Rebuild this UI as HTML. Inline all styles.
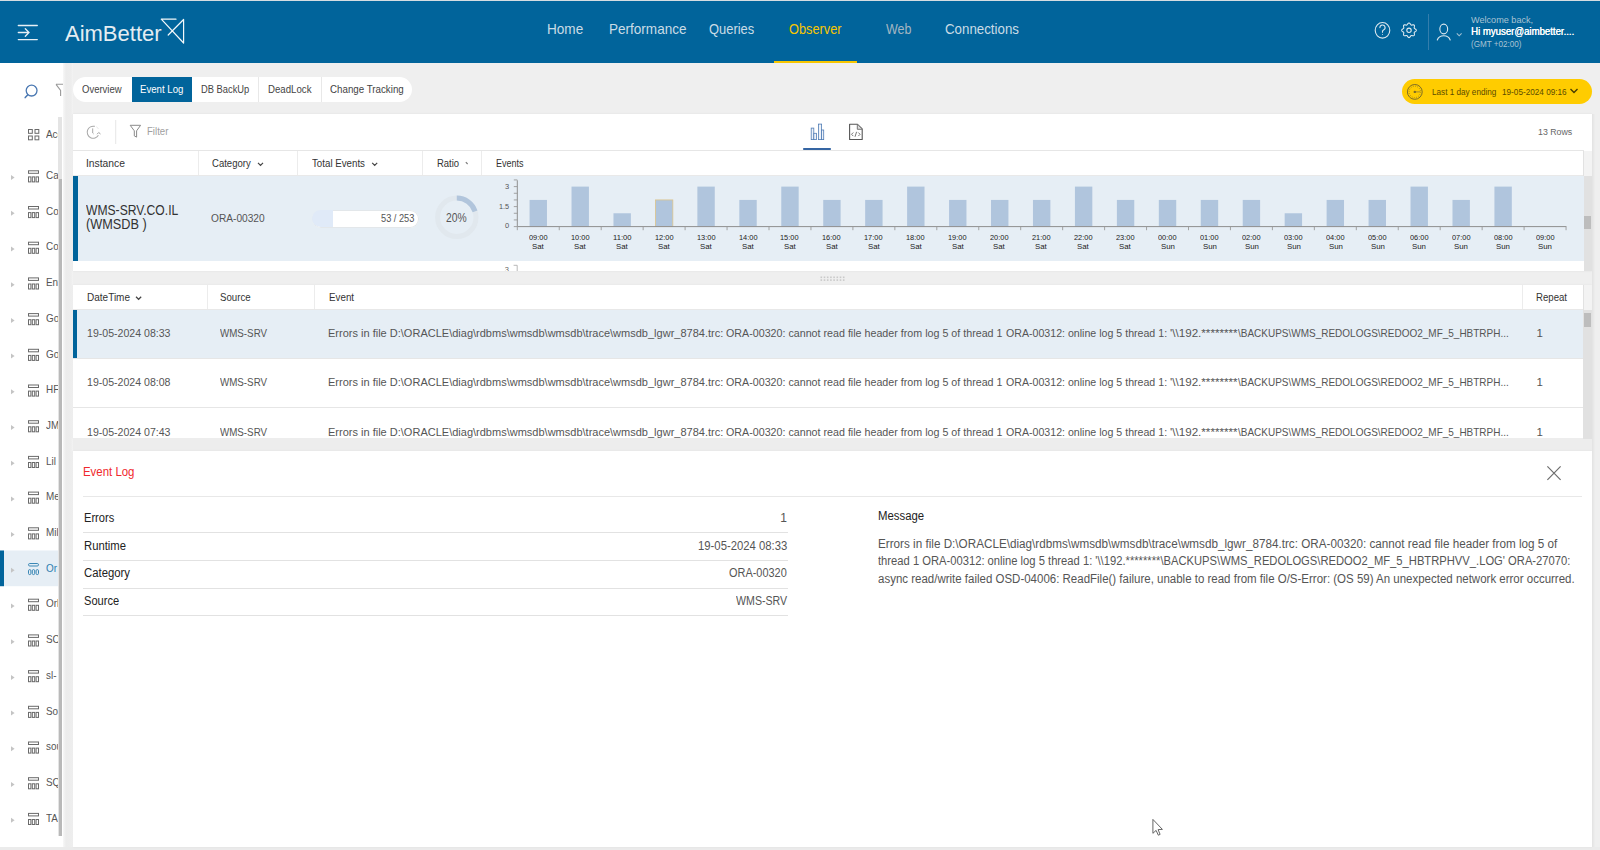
<!DOCTYPE html>
<html><head><meta charset="utf-8"><style>
html,body{margin:0;padding:0;}
body{width:1600px;height:850px;position:relative;overflow:hidden;background:#efefef;font-family:"Liberation Sans",sans-serif;}
body>div,body>svg,.t{position:absolute;}
.t{white-space:nowrap;line-height:1;transform-origin:0 0;}
</style></head><body>
<div style="left:0px;top:0px;width:1600px;height:1px;background:#d5dde2;"></div>
<div style="left:0px;top:1px;width:1600px;height:62px;background:#01649b;"></div>
<svg style="left:0px;top:0px" width="200" height="63" viewBox="0 0 200 63"><g stroke="#e8f0f5" stroke-width="1.3" fill="none" stroke-linecap="round"><path d="M18.3 25.5H37.3M18.3 39.6H37.3M18.3 32.5H29M25.3 28.7L29 32.5L25.3 36.3"/></g><g stroke="#f4f8fa" stroke-width="1.2" fill="none" stroke-linecap="round" stroke-linejoin="round"><path d="M161.3 19.2H176M161.3 19.2L183.6 43M183.6 19.5V43M183.6 19.5L168.2 35"/></g></svg>
<div style="left:774px;top:61px;width:83px;height:2px;background:#f7c600;"></div>
<svg style="left:1360px;top:0px" width="120" height="63" viewBox="1360 0 120 63"><g stroke="#dbe7ee" stroke-width="1.1" fill="none"><ellipse cx="1382.5" cy="30.3" rx="7.3" ry="7.8"/><path d="M1379.9 27.6a2.6 2.6 0 1 1 3.6 2.4c-.8.4-1 .9-1 1.6V32.3" stroke-linecap="round"/><circle cx="1382.5" cy="34.6" r="0.5" fill="#dbe7ee" stroke="none"/><circle cx="1409" cy="30.3" r="2.2"/><path d="M1409.00 23.00 L1409.29 23.04 L1409.56 23.17 L1409.82 23.38 L1410.06 23.64 L1410.27 23.92 L1410.46 24.22 L1410.64 24.50 L1410.81 24.73 L1410.99 24.92 L1411.18 25.03 L1411.40 25.09 L1411.66 25.09 L1411.95 25.04 L1412.27 24.97 L1412.61 24.90 L1412.97 24.84 L1413.32 24.83 L1413.64 24.87 L1413.93 24.97 L1414.16 25.14 L1414.33 25.37 L1414.43 25.66 L1414.47 25.98 L1414.46 26.33 L1414.40 26.69 L1414.33 27.03 L1414.26 27.35 L1414.21 27.64 L1414.21 27.90 L1414.27 28.12 L1414.38 28.31 L1414.57 28.49 L1414.80 28.66 L1415.08 28.84 L1415.38 29.03 L1415.66 29.24 L1415.92 29.48 L1416.13 29.74 L1416.26 30.01 L1416.30 30.30 L1416.26 30.59 L1416.13 30.86 L1415.92 31.12 L1415.66 31.36 L1415.38 31.57 L1415.08 31.76 L1414.80 31.94 L1414.57 32.11 L1414.38 32.29 L1414.27 32.48 L1414.21 32.70 L1414.21 32.96 L1414.26 33.25 L1414.33 33.57 L1414.40 33.91 L1414.46 34.27 L1414.47 34.62 L1414.43 34.94 L1414.33 35.23 L1414.16 35.46 L1413.93 35.63 L1413.64 35.73 L1413.32 35.77 L1412.97 35.76 L1412.61 35.70 L1412.27 35.63 L1411.95 35.56 L1411.66 35.51 L1411.40 35.51 L1411.18 35.57 L1410.99 35.68 L1410.81 35.87 L1410.64 36.10 L1410.46 36.38 L1410.27 36.68 L1410.06 36.96 L1409.82 37.22 L1409.56 37.43 L1409.29 37.56 L1409.00 37.60 L1408.71 37.56 L1408.44 37.43 L1408.18 37.22 L1407.94 36.96 L1407.73 36.68 L1407.54 36.38 L1407.36 36.10 L1407.19 35.87 L1407.01 35.68 L1406.82 35.57 L1406.60 35.51 L1406.34 35.51 L1406.05 35.56 L1405.73 35.63 L1405.39 35.70 L1405.03 35.76 L1404.68 35.77 L1404.36 35.73 L1404.07 35.63 L1403.84 35.46 L1403.67 35.23 L1403.57 34.94 L1403.53 34.62 L1403.54 34.27 L1403.60 33.91 L1403.67 33.57 L1403.74 33.25 L1403.79 32.96 L1403.79 32.70 L1403.73 32.48 L1403.62 32.29 L1403.43 32.11 L1403.20 31.94 L1402.92 31.76 L1402.62 31.57 L1402.34 31.36 L1402.08 31.12 L1401.87 30.86 L1401.74 30.59 L1401.70 30.30 L1401.74 30.01 L1401.87 29.74 L1402.08 29.48 L1402.34 29.24 L1402.62 29.03 L1402.92 28.84 L1403.20 28.66 L1403.43 28.49 L1403.62 28.31 L1403.73 28.12 L1403.79 27.90 L1403.79 27.64 L1403.74 27.35 L1403.67 27.03 L1403.60 26.69 L1403.54 26.33 L1403.53 25.98 L1403.57 25.66 L1403.67 25.37 L1403.84 25.14 L1404.07 24.97 L1404.36 24.87 L1404.68 24.83 L1405.03 24.84 L1405.39 24.90 L1405.73 24.97 L1406.05 25.04 L1406.34 25.09 L1406.60 25.09 L1406.82 25.03 L1407.01 24.92 L1407.19 24.73 L1407.36 24.50 L1407.54 24.22 L1407.73 23.92 L1407.94 23.64 L1408.18 23.38 L1408.44 23.17 L1408.71 23.04 L1409.00 23.00Z"/><ellipse cx="1443.75" cy="29" rx="3.9" ry="4.9"/><path d="M1437.3 40C1439.2 34.3 1448.3 34.3 1450.2 40" stroke-linecap="round"/><path d="M1456.8 33.3l2.4 2.5 2.4-2.5" stroke="#9fbfd2"/></g><rect x="1428" y="14" width="0.9" height="36" fill="#3a82ae"/></svg>
<div style="left:0px;top:63px;width:63px;height:784px;background:#ffffff;"></div>
<div style="left:63px;top:63px;width:10px;height:784px;background:linear-gradient(90deg,#f7f7f7,#ececec 30%,#ededed 80%,#f3f3f3);"></div>
<svg style="left:0px;top:63px" width="63" height="50" viewBox="0 63 63 50"><circle cx="31.6" cy="90.6" r="5.4" stroke="#4a78b2" stroke-width="1.3" fill="none"/><path d="M27.6 95L25.2 97.6" stroke="#4a78b2" stroke-width="1.5" stroke-linecap="round"/><path d="M56 84.3H63M56 84.3L60.6 90.5V96" stroke="#9a9a9a" stroke-width="1.1" fill="none"/></svg>
<svg style="left:0px;top:63px" width="63" height="784" viewBox="0 63 63 784"><rect x="28.5" y="129.5" width="3.8" height="3.8" fill="none" stroke="#6a6a6a" stroke-width="1"/><rect x="28.5" y="136.0" width="3.8" height="3.8" fill="none" stroke="#6a6a6a" stroke-width="1"/><rect x="35" y="129.5" width="3.8" height="3.8" fill="none" stroke="#6a6a6a" stroke-width="1"/><rect x="35" y="136.0" width="3.8" height="3.8" fill="none" stroke="#6a6a6a" stroke-width="1"/><path d="M11 175.1L14.6 177.6L11 180.1Z" fill="#c4c4c4"/><rect x="28.5" y="170.8" width="10" height="2.5" rx="0" fill="none" stroke="#6a6a6a" stroke-width="1"/><rect x="28.5" y="176.9" width="2.4" height="5" rx="0" fill="none" stroke="#6a6a6a" stroke-width="1"/><rect x="32.3" y="176.9" width="2.4" height="5" rx="0" fill="none" stroke="#6a6a6a" stroke-width="1"/><rect x="36.1" y="176.9" width="2.4" height="5" rx="0" fill="none" stroke="#6a6a6a" stroke-width="1"/><path d="M11 210.8L14.6 213.3L11 215.8Z" fill="#c4c4c4"/><rect x="28.5" y="206.5" width="10" height="2.5" rx="0" fill="none" stroke="#6a6a6a" stroke-width="1"/><rect x="28.5" y="212.6" width="2.4" height="5" rx="0" fill="none" stroke="#6a6a6a" stroke-width="1"/><rect x="32.3" y="212.6" width="2.4" height="5" rx="0" fill="none" stroke="#6a6a6a" stroke-width="1"/><rect x="36.1" y="212.6" width="2.4" height="5" rx="0" fill="none" stroke="#6a6a6a" stroke-width="1"/><path d="M11 246.5L14.6 249.0L11 251.5Z" fill="#c4c4c4"/><rect x="28.5" y="242.2" width="10" height="2.5" rx="0" fill="none" stroke="#6a6a6a" stroke-width="1"/><rect x="28.5" y="248.3" width="2.4" height="5" rx="0" fill="none" stroke="#6a6a6a" stroke-width="1"/><rect x="32.3" y="248.3" width="2.4" height="5" rx="0" fill="none" stroke="#6a6a6a" stroke-width="1"/><rect x="36.1" y="248.3" width="2.4" height="5" rx="0" fill="none" stroke="#6a6a6a" stroke-width="1"/><path d="M11 282.2L14.6 284.7L11 287.2Z" fill="#c4c4c4"/><rect x="28.5" y="277.9" width="10" height="2.5" rx="0" fill="none" stroke="#6a6a6a" stroke-width="1"/><rect x="28.5" y="284.0" width="2.4" height="5" rx="0" fill="none" stroke="#6a6a6a" stroke-width="1"/><rect x="32.3" y="284.0" width="2.4" height="5" rx="0" fill="none" stroke="#6a6a6a" stroke-width="1"/><rect x="36.1" y="284.0" width="2.4" height="5" rx="0" fill="none" stroke="#6a6a6a" stroke-width="1"/><path d="M11 317.9L14.6 320.4L11 322.9Z" fill="#c4c4c4"/><rect x="28.5" y="313.6" width="10" height="2.5" rx="0" fill="none" stroke="#6a6a6a" stroke-width="1"/><rect x="28.5" y="319.7" width="2.4" height="5" rx="0" fill="none" stroke="#6a6a6a" stroke-width="1"/><rect x="32.3" y="319.7" width="2.4" height="5" rx="0" fill="none" stroke="#6a6a6a" stroke-width="1"/><rect x="36.1" y="319.7" width="2.4" height="5" rx="0" fill="none" stroke="#6a6a6a" stroke-width="1"/><path d="M11 353.6L14.6 356.1L11 358.6Z" fill="#c4c4c4"/><rect x="28.5" y="349.3" width="10" height="2.5" rx="0" fill="none" stroke="#6a6a6a" stroke-width="1"/><rect x="28.5" y="355.4" width="2.4" height="5" rx="0" fill="none" stroke="#6a6a6a" stroke-width="1"/><rect x="32.3" y="355.4" width="2.4" height="5" rx="0" fill="none" stroke="#6a6a6a" stroke-width="1"/><rect x="36.1" y="355.4" width="2.4" height="5" rx="0" fill="none" stroke="#6a6a6a" stroke-width="1"/><path d="M11 389.3L14.6 391.8L11 394.3Z" fill="#c4c4c4"/><rect x="28.5" y="385.0" width="10" height="2.5" rx="0" fill="none" stroke="#6a6a6a" stroke-width="1"/><rect x="28.5" y="391.1" width="2.4" height="5" rx="0" fill="none" stroke="#6a6a6a" stroke-width="1"/><rect x="32.3" y="391.1" width="2.4" height="5" rx="0" fill="none" stroke="#6a6a6a" stroke-width="1"/><rect x="36.1" y="391.1" width="2.4" height="5" rx="0" fill="none" stroke="#6a6a6a" stroke-width="1"/><path d="M11 425.0L14.6 427.5L11 430.0Z" fill="#c4c4c4"/><rect x="28.5" y="420.7" width="10" height="2.5" rx="0" fill="none" stroke="#6a6a6a" stroke-width="1"/><rect x="28.5" y="426.8" width="2.4" height="5" rx="0" fill="none" stroke="#6a6a6a" stroke-width="1"/><rect x="32.3" y="426.8" width="2.4" height="5" rx="0" fill="none" stroke="#6a6a6a" stroke-width="1"/><rect x="36.1" y="426.8" width="2.4" height="5" rx="0" fill="none" stroke="#6a6a6a" stroke-width="1"/><path d="M11 460.7L14.6 463.2L11 465.7Z" fill="#c4c4c4"/><rect x="28.5" y="456.4" width="10" height="2.5" rx="0" fill="none" stroke="#6a6a6a" stroke-width="1"/><rect x="28.5" y="462.5" width="2.4" height="5" rx="0" fill="none" stroke="#6a6a6a" stroke-width="1"/><rect x="32.3" y="462.5" width="2.4" height="5" rx="0" fill="none" stroke="#6a6a6a" stroke-width="1"/><rect x="36.1" y="462.5" width="2.4" height="5" rx="0" fill="none" stroke="#6a6a6a" stroke-width="1"/><path d="M11 496.4L14.6 498.9L11 501.4Z" fill="#c4c4c4"/><rect x="28.5" y="492.1" width="10" height="2.5" rx="0" fill="none" stroke="#6a6a6a" stroke-width="1"/><rect x="28.5" y="498.2" width="2.4" height="5" rx="0" fill="none" stroke="#6a6a6a" stroke-width="1"/><rect x="32.3" y="498.2" width="2.4" height="5" rx="0" fill="none" stroke="#6a6a6a" stroke-width="1"/><rect x="36.1" y="498.2" width="2.4" height="5" rx="0" fill="none" stroke="#6a6a6a" stroke-width="1"/><path d="M11 532.1L14.6 534.6L11 537.1Z" fill="#c4c4c4"/><rect x="28.5" y="527.8" width="10" height="2.5" rx="0" fill="none" stroke="#6a6a6a" stroke-width="1"/><rect x="28.5" y="533.9" width="2.4" height="5" rx="0" fill="none" stroke="#6a6a6a" stroke-width="1"/><rect x="32.3" y="533.9" width="2.4" height="5" rx="0" fill="none" stroke="#6a6a6a" stroke-width="1"/><rect x="36.1" y="533.9" width="2.4" height="5" rx="0" fill="none" stroke="#6a6a6a" stroke-width="1"/><rect x="0" y="550.5" width="58.6" height="35.7" fill="#e6eef5"/><rect x="0" y="550.5" width="4" height="35.7" fill="#01649b"/><path d="M11 567.8L14.6 570.3L11 572.8Z" fill="#c4c4c4"/><rect x="28.5" y="563.5" width="10" height="2.5" rx="1.25" fill="none" stroke="#3a87b5" stroke-width="1"/><rect x="28.5" y="569.6" width="2.4" height="5" rx="1.2" fill="none" stroke="#3a87b5" stroke-width="1"/><rect x="32.3" y="569.6" width="2.4" height="5" rx="1.2" fill="none" stroke="#3a87b5" stroke-width="1"/><rect x="36.1" y="569.6" width="2.4" height="5" rx="1.2" fill="none" stroke="#3a87b5" stroke-width="1"/><path d="M11 603.5L14.6 606.0L11 608.5Z" fill="#c4c4c4"/><rect x="28.5" y="599.2" width="10" height="2.5" rx="0" fill="none" stroke="#6a6a6a" stroke-width="1"/><rect x="28.5" y="605.3" width="2.4" height="5" rx="0" fill="none" stroke="#6a6a6a" stroke-width="1"/><rect x="32.3" y="605.3" width="2.4" height="5" rx="0" fill="none" stroke="#6a6a6a" stroke-width="1"/><rect x="36.1" y="605.3" width="2.4" height="5" rx="0" fill="none" stroke="#6a6a6a" stroke-width="1"/><path d="M11 639.2L14.6 641.7L11 644.2Z" fill="#c4c4c4"/><rect x="28.5" y="634.9" width="10" height="2.5" rx="0" fill="none" stroke="#6a6a6a" stroke-width="1"/><rect x="28.5" y="641.0" width="2.4" height="5" rx="0" fill="none" stroke="#6a6a6a" stroke-width="1"/><rect x="32.3" y="641.0" width="2.4" height="5" rx="0" fill="none" stroke="#6a6a6a" stroke-width="1"/><rect x="36.1" y="641.0" width="2.4" height="5" rx="0" fill="none" stroke="#6a6a6a" stroke-width="1"/><path d="M11 674.9L14.6 677.4L11 679.9Z" fill="#c4c4c4"/><rect x="28.5" y="670.6" width="10" height="2.5" rx="0" fill="none" stroke="#6a6a6a" stroke-width="1"/><rect x="28.5" y="676.7" width="2.4" height="5" rx="0" fill="none" stroke="#6a6a6a" stroke-width="1"/><rect x="32.3" y="676.7" width="2.4" height="5" rx="0" fill="none" stroke="#6a6a6a" stroke-width="1"/><rect x="36.1" y="676.7" width="2.4" height="5" rx="0" fill="none" stroke="#6a6a6a" stroke-width="1"/><path d="M11 710.6L14.6 713.1L11 715.6Z" fill="#c4c4c4"/><rect x="28.5" y="706.3" width="10" height="2.5" rx="0" fill="none" stroke="#6a6a6a" stroke-width="1"/><rect x="28.5" y="712.4" width="2.4" height="5" rx="0" fill="none" stroke="#6a6a6a" stroke-width="1"/><rect x="32.3" y="712.4" width="2.4" height="5" rx="0" fill="none" stroke="#6a6a6a" stroke-width="1"/><rect x="36.1" y="712.4" width="2.4" height="5" rx="0" fill="none" stroke="#6a6a6a" stroke-width="1"/><path d="M11 746.3L14.6 748.8L11 751.3Z" fill="#c4c4c4"/><rect x="28.5" y="742.0" width="10" height="2.5" rx="0" fill="none" stroke="#6a6a6a" stroke-width="1"/><rect x="28.5" y="748.1" width="2.4" height="5" rx="0" fill="none" stroke="#6a6a6a" stroke-width="1"/><rect x="32.3" y="748.1" width="2.4" height="5" rx="0" fill="none" stroke="#6a6a6a" stroke-width="1"/><rect x="36.1" y="748.1" width="2.4" height="5" rx="0" fill="none" stroke="#6a6a6a" stroke-width="1"/><path d="M11 782.0L14.6 784.5L11 787.0Z" fill="#c4c4c4"/><rect x="28.5" y="777.7" width="10" height="2.5" rx="0" fill="none" stroke="#6a6a6a" stroke-width="1"/><rect x="28.5" y="783.8" width="2.4" height="5" rx="0" fill="none" stroke="#6a6a6a" stroke-width="1"/><rect x="32.3" y="783.8" width="2.4" height="5" rx="0" fill="none" stroke="#6a6a6a" stroke-width="1"/><rect x="36.1" y="783.8" width="2.4" height="5" rx="0" fill="none" stroke="#6a6a6a" stroke-width="1"/><path d="M11 817.7L14.6 820.2L11 822.7Z" fill="#c4c4c4"/><rect x="28.5" y="813.4" width="10" height="2.5" rx="0" fill="none" stroke="#6a6a6a" stroke-width="1"/><rect x="28.5" y="819.5" width="2.4" height="5" rx="0" fill="none" stroke="#6a6a6a" stroke-width="1"/><rect x="32.3" y="819.5" width="2.4" height="5" rx="0" fill="none" stroke="#6a6a6a" stroke-width="1"/><rect x="36.1" y="819.5" width="2.4" height="5" rx="0" fill="none" stroke="#6a6a6a" stroke-width="1"/></svg>
<div style="left:0;top:63px;width:58px;height:784px;overflow:hidden;"><span class="t" style="left:46px;top:66.09px;font-size:11px;color:#555;transform:scaleX(0.9)">Accounts</span><span class="t" style="left:46px;top:107.09px;font-size:11px;color:#555;transform:scaleX(0.9)">Catalog</span><span class="t" style="left:46px;top:142.79px;font-size:11px;color:#555;transform:scaleX(0.9)">Commerce</span><span class="t" style="left:46px;top:178.49px;font-size:11px;color:#555;transform:scaleX(0.9)">Contacts</span><span class="t" style="left:46px;top:214.19px;font-size:11px;color:#555;transform:scaleX(0.9)">Enterprise</span><span class="t" style="left:46px;top:249.89px;font-size:11px;color:#555;transform:scaleX(0.9)">Google</span><span class="t" style="left:46px;top:285.59px;font-size:11px;color:#555;transform:scaleX(0.9)">GoShop</span><span class="t" style="left:46px;top:321.29px;font-size:11px;color:#555;transform:scaleX(0.9)">HFM</span><span class="t" style="left:46px;top:356.99px;font-size:11px;color:#555;transform:scaleX(0.9)">JMS</span><span class="t" style="left:46px;top:392.69px;font-size:11px;color:#555;transform:scaleX(0.9)">Lil DB</span><span class="t" style="left:46px;top:428.39px;font-size:11px;color:#555;transform:scaleX(0.9)">MedDB</span><span class="t" style="left:46px;top:464.09px;font-size:11px;color:#555;transform:scaleX(0.9)">MilDB</span><span class="t" style="left:46px;top:499.79px;font-size:11px;color:#2f7fb0;transform:scaleX(0.9)">Or DB</span><span class="t" style="left:46px;top:535.49px;font-size:11px;color:#555;transform:scaleX(0.9)">Orbit</span><span class="t" style="left:46px;top:571.19px;font-size:11px;color:#555;transform:scaleX(0.9)">SCM</span><span class="t" style="left:46px;top:606.89px;font-size:11px;color:#555;transform:scaleX(0.9)">sl- DB</span><span class="t" style="left:46px;top:642.59px;font-size:11px;color:#555;transform:scaleX(0.9)">SoftDB</span><span class="t" style="left:46px;top:678.29px;font-size:11px;color:#555;transform:scaleX(0.9)">source</span><span class="t" style="left:46px;top:713.99px;font-size:11px;color:#555;transform:scaleX(0.9)">SQLDB</span><span class="t" style="left:46px;top:749.69px;font-size:11px;color:#555;transform:scaleX(0.9)">TAX</span></div>
<div style="left:58.3px;top:117px;width:4.2px;height:719px;background:#e4e4e4;"></div>
<div style="left:58.6px;top:179px;width:3.6px;height:657px;background:#b9b9b9;"></div>
<div style="left:0px;top:847px;width:1600px;height:3px;background:#ebebeb;"></div>
<div style="left:73px;top:77px;width:339px;height:25px;background:#ffffff;border-radius:12.5px;"></div>
<div style="left:132px;top:77px;width:60px;height:25px;background:#01649b;"></div>
<div style="left:258px;top:77px;width:1px;height:25px;background:#e8e8e8;"></div>
<div style="left:320.5px;top:77px;width:1px;height:25px;background:#e8e8e8;"></div>
<div style="left:1402px;top:78.5px;width:190px;height:25.5px;background:#ffcc00;border-radius:13px;"></div>
<svg style="left:1400px;top:76px" width="30" height="30" viewBox="1400 76 30 30"><circle cx="1414.8" cy="91.9" r="7.4" fill="none" stroke="#7d6c26" stroke-width="1"/><circle cx="1414.8" cy="91.9" r="5.7" fill="none" stroke="#8f7a20" stroke-width="0.8" stroke-dasharray="0.9 1.3"/><path d="M1414.8 91.9H1420.3" stroke="#a08a30" stroke-width="1"/><circle cx="1414.8" cy="91.9" r="1.2" fill="#7d6c26"/></svg>
<svg style="left:1566px;top:84px" width="16" height="12" viewBox="1566 84 16 12"><path d="M1570.5 89L1574 92.5L1577.5 89" stroke="#4a3d00" stroke-width="1.4" fill="none"/></svg>
<div style="left:73px;top:114px;width:1519px;height:157px;background:#ffffff;box-shadow:0 0 2px rgba(0,0,0,0.07);"></div>
<div style="left:73px;top:150px;width:1511px;height:1px;background:#e6e6e6;"></div>
<div style="left:73px;top:175px;width:1511px;height:1px;background:#e9e9e9;"></div>
<svg style="left:80px;top:118px" width="100" height="30" viewBox="80 118 100 30"><path d="M94.75 126.4A6 6 0 1 0 98.4 135.2" stroke="#ababab" stroke-width="1.1" fill="none"/><path d="M96.5 126.9A6 6 0 0 1 98.3 128.7" stroke="#dedede" stroke-width="0.9" fill="none"/><path d="M92.7 128.4V133L93.6 133.9" stroke="#a8a8a8" stroke-width="1" fill="none"/><path d="M97.1 134.2L98.7 132.5L100.5 134" stroke="#a0a0a0" stroke-width="1" fill="none"/><rect x="115.3" y="120" width="0.9" height="24" fill="#e3e3e3"/><path d="M130.2 125.3H140.6L136.6 130.8V137.1L134.3 135.9V130.8Z" stroke="#8a8a8a" stroke-width="1" fill="none" stroke-linejoin="round"/></svg>
<svg style="left:800px;top:118px" width="70" height="34" viewBox="800 118 70 34"><g stroke="#4f7cb5" stroke-width="0.8" fill="#eef2f9"><rect x="811.2" y="128.1" width="2.6" height="11.5"/><rect x="813.8" y="133.3" width="2.7" height="6.3"/><rect x="818.4" y="124.1" width="3.2" height="15.5"/><rect x="821.6" y="130" width="2.1" height="9.6"/></g><rect x="803.2" y="148" width="27.6" height="2" fill="#3565a3"/><path d="M849.6 124.3H857.5L862.2 129V139.5H849.6Z" stroke="#555" stroke-width="1.1" fill="#fff" stroke-linejoin="round"/><path d="M857.3 124.5V129.3H862" stroke="#777" stroke-width="1" fill="#ddd"/><path d="M853.3 132.5L851.5 134.3L853.3 136.1M858.3 132.5L860.1 134.3L858.3 136.1M856.6 131.8L855 136.8" stroke="#555" stroke-width="0.8" fill="none"/></svg>
<div style="left:197.5px;top:151px;width:1px;height:24px;background:#ececec;"></div>
<div style="left:297px;top:151px;width:1px;height:24px;background:#ececec;"></div>
<div style="left:422.3px;top:151px;width:1px;height:24px;background:#ececec;"></div>
<div style="left:481.4px;top:151px;width:1px;height:24px;background:#ececec;"></div>
<svg style="left:250px;top:155px" width="230" height="20" viewBox="250 155 230 20"><path d="M258 162.8L260.5 165.3L263 162.8M372.2 162.8L374.7 165.3L377.2 162.8" stroke="#444" stroke-width="1.2" fill="none"/><path d="M465.8 162.2L467.6 164" stroke="#777" stroke-width="1.1"/></svg>
<div style="left:73px;top:175.5px;width:1511px;height:85px;background:#e6eef5;"></div>
<div style="left:73px;top:175.5px;width:4.5px;height:85px;background:#01649b;"></div>
<div style="left:311.7px;top:209.5px;width:107.3px;height:18px;background:#ffffff;border-radius:9px;box-shadow:inset 0 0 0 1px #e3e7ea;"></div>
<div style="left:312.2px;top:210px;width:20.8px;height:17px;background:#e0eaf8;border-radius:8.5px 0 0 8.5px;"></div>
<svg style="left:430px;top:190px" width="55" height="55" viewBox="430 190 55 55"><circle cx="456.8" cy="217.3" r="19.2" stroke="#e1e8ee" stroke-width="5" fill="none"/><path d="M456.8 198.10A19.2 19.2 0 0 1 475.06 211.37" stroke="#b1c5dc" stroke-width="5" fill="none"/></svg>
<svg style="left:490px;top:176px" width="1090" height="95" viewBox="490 176 1090 95"><rect x="529.57" y="199.93" width="17.4" height="26.67" fill="#b0c5dd"/><rect x="571.52" y="186.60" width="17.4" height="40.00" fill="#b0c5dd"/><rect x="613.47" y="213.27" width="17.4" height="13.33" fill="#b0c5dd"/><rect x="655.42" y="199.93" width="17.4" height="26.67" fill="#b0c5dd" stroke="#dcc48a" stroke-width="0.8"/><rect x="697.37" y="186.60" width="17.4" height="40.00" fill="#b0c5dd"/><rect x="739.32" y="199.93" width="17.4" height="26.67" fill="#b0c5dd"/><rect x="781.27" y="186.60" width="17.4" height="40.00" fill="#b0c5dd"/><rect x="823.22" y="199.93" width="17.4" height="26.67" fill="#b0c5dd"/><rect x="865.17" y="199.93" width="17.4" height="26.67" fill="#b0c5dd"/><rect x="907.12" y="186.60" width="17.4" height="40.00" fill="#b0c5dd"/><rect x="949.07" y="199.93" width="17.4" height="26.67" fill="#b0c5dd"/><rect x="991.02" y="199.93" width="17.4" height="26.67" fill="#b0c5dd"/><rect x="1032.97" y="199.93" width="17.4" height="26.67" fill="#b0c5dd"/><rect x="1074.92" y="186.60" width="17.4" height="40.00" fill="#b0c5dd"/><rect x="1116.88" y="199.93" width="17.4" height="26.67" fill="#b0c5dd"/><rect x="1158.83" y="199.93" width="17.4" height="26.67" fill="#b0c5dd"/><rect x="1200.77" y="199.93" width="17.4" height="26.67" fill="#b0c5dd"/><rect x="1242.72" y="199.93" width="17.4" height="26.67" fill="#b0c5dd"/><rect x="1284.67" y="213.27" width="17.4" height="13.33" fill="#b0c5dd"/><rect x="1326.62" y="199.93" width="17.4" height="26.67" fill="#b0c5dd"/><rect x="1368.58" y="199.93" width="17.4" height="26.67" fill="#b0c5dd"/><rect x="1410.52" y="186.60" width="17.4" height="40.00" fill="#b0c5dd"/><rect x="1452.48" y="199.93" width="17.4" height="26.67" fill="#b0c5dd"/><rect x="1494.42" y="186.60" width="17.4" height="40.00" fill="#b0c5dd"/><path d="M517.3 180.3V226.6H1566.4" stroke="#8f8f8f" stroke-width="1" fill="none"/><path d="M513.8 226.60H517.3M513.8 219.93H517.3M513.8 213.27H517.3M513.8 206.60H517.3M513.8 199.93H517.3M513.8 193.27H517.3M513.8 186.60H517.3M513.8 179.93H517.3M517.30 226.6V230.2M559.25 226.6V230.2M601.20 226.6V230.2M643.15 226.6V230.2M685.10 226.6V230.2M727.05 226.6V230.2M769.00 226.6V230.2M810.95 226.6V230.2M852.90 226.6V230.2M894.85 226.6V230.2M936.80 226.6V230.2M978.75 226.6V230.2M1020.70 226.6V230.2M1062.65 226.6V230.2M1104.60 226.6V230.2M1146.55 226.6V230.2M1188.50 226.6V230.2M1230.45 226.6V230.2M1272.40 226.6V230.2M1314.35 226.6V230.2M1356.30 226.6V230.2M1398.25 226.6V230.2M1440.20 226.6V230.2M1482.15 226.6V230.2M1524.10 226.6V230.2M1566.05 226.6V230.2" stroke="#9a9a9a" stroke-width="0.9" fill="none"/><path d="M513.6 265.3H517.2V271" stroke="#b0b0b0" stroke-width="0.9" fill="none"/></svg>
<div style="left:500px;top:262px;width:12px;height:8.5px;overflow:hidden"><span class="t" style="left:4.8px;top:4.2px;font-size:7.5px;color:#666">3</span></div>
<div style="left:1583.5px;top:151px;width:8.5px;height:24.5px;background:#f3f3f3;"></div>
<div style="left:1583.5px;top:175.5px;width:8.5px;height:95px;background:#e1e1e1;"></div>
<div style="left:1584.4px;top:216px;width:6.6px;height:13px;background:#bdbdbd;"></div>
<div style="left:1582.8px;top:150.5px;width:1px;height:25px;background:#e2e2e2;"></div>
<svg style="left:800px;top:270px" width="60" height="185" viewBox="800 270 60 185"><rect x="820.5" y="276.5" width="1.6" height="1.6" fill="#c9c9c9"/><rect x="820.5" y="279.3" width="1.6" height="1.6" fill="#c9c9c9"/><rect x="820.5" y="443.6" width="1.6" height="1.6" fill="#c9c9c9"/><rect x="820.5" y="446.4" width="1.6" height="1.6" fill="#c9c9c9"/><rect x="823.7" y="276.5" width="1.6" height="1.6" fill="#c9c9c9"/><rect x="823.7" y="279.3" width="1.6" height="1.6" fill="#c9c9c9"/><rect x="823.7" y="443.6" width="1.6" height="1.6" fill="#c9c9c9"/><rect x="823.7" y="446.4" width="1.6" height="1.6" fill="#c9c9c9"/><rect x="826.9" y="276.5" width="1.6" height="1.6" fill="#c9c9c9"/><rect x="826.9" y="279.3" width="1.6" height="1.6" fill="#c9c9c9"/><rect x="826.9" y="443.6" width="1.6" height="1.6" fill="#c9c9c9"/><rect x="826.9" y="446.4" width="1.6" height="1.6" fill="#c9c9c9"/><rect x="830.1" y="276.5" width="1.6" height="1.6" fill="#c9c9c9"/><rect x="830.1" y="279.3" width="1.6" height="1.6" fill="#c9c9c9"/><rect x="830.1" y="443.6" width="1.6" height="1.6" fill="#c9c9c9"/><rect x="830.1" y="446.4" width="1.6" height="1.6" fill="#c9c9c9"/><rect x="833.3" y="276.5" width="1.6" height="1.6" fill="#c9c9c9"/><rect x="833.3" y="279.3" width="1.6" height="1.6" fill="#c9c9c9"/><rect x="833.3" y="443.6" width="1.6" height="1.6" fill="#c9c9c9"/><rect x="833.3" y="446.4" width="1.6" height="1.6" fill="#c9c9c9"/><rect x="836.5" y="276.5" width="1.6" height="1.6" fill="#c9c9c9"/><rect x="836.5" y="279.3" width="1.6" height="1.6" fill="#c9c9c9"/><rect x="836.5" y="443.6" width="1.6" height="1.6" fill="#c9c9c9"/><rect x="836.5" y="446.4" width="1.6" height="1.6" fill="#c9c9c9"/><rect x="839.7" y="276.5" width="1.6" height="1.6" fill="#c9c9c9"/><rect x="839.7" y="279.3" width="1.6" height="1.6" fill="#c9c9c9"/><rect x="839.7" y="443.6" width="1.6" height="1.6" fill="#c9c9c9"/><rect x="839.7" y="446.4" width="1.6" height="1.6" fill="#c9c9c9"/><rect x="842.9" y="276.5" width="1.6" height="1.6" fill="#c9c9c9"/><rect x="842.9" y="279.3" width="1.6" height="1.6" fill="#c9c9c9"/><rect x="842.9" y="443.6" width="1.6" height="1.6" fill="#c9c9c9"/><rect x="842.9" y="446.4" width="1.6" height="1.6" fill="#c9c9c9"/></svg>
<div style="left:73px;top:285px;width:1519px;height:153.5px;background:#ffffff;box-shadow:0 0 2px rgba(0,0,0,0.06);"></div>
<div style="left:73px;top:309px;width:1510px;height:1px;background:#e8e8e8;"></div>
<div style="left:206.5px;top:285px;width:1px;height:24px;background:#ececec;"></div>
<div style="left:314.1px;top:285px;width:1px;height:24px;background:#ececec;"></div>
<div style="left:1521.8px;top:285px;width:1px;height:24px;background:#ececec;"></div>
<svg style="left:130px;top:290px" width="20" height="16" viewBox="130 290 20 16"><path d="M136 296.8L138.6 299.3L141.2 296.8" stroke="#444" stroke-width="1.2" fill="none"/></svg>
<div style="left:73px;top:310px;width:1510px;height:48px;background:#e6eef5;"></div>
<div style="left:73px;top:310px;width:4.3px;height:48px;background:#01649b;"></div>
<div style="left:73px;top:358px;width:1510px;height:1px;background:#e6e6e6;"></div>
<div style="left:73px;top:407px;width:1510px;height:1px;background:#e6e6e6;"></div>
<div style="left:73px;top:438.3px;width:1519px;height:13px;background:#ededed;"></div>
<div style="left:1583.3px;top:285px;width:8.7px;height:24.5px;background:#f3f3f3;"></div>
<div style="left:1583.3px;top:309.5px;width:8.7px;height:129px;background:#e1e1e1;"></div>
<div style="left:1584.2px;top:312.8px;width:6.9px;height:14.2px;background:#bdbdbd;"></div>
<div style="left:1582.6px;top:285px;width:1px;height:24.5px;background:#e2e2e2;"></div>
<div style="left:73px;top:451px;width:1519px;height:396px;background:#ffffff;box-shadow:0 0 2px rgba(0,0,0,0.06);"></div>
<div style="left:83px;top:495.5px;width:1499px;height:1px;background:#e8e8e8;"></div>
<svg style="left:1540px;top:460px" width="30" height="30" viewBox="1540 460 30 30"><path d="M1547.4 466.4L1560.6 479.8M1560.6 466.4L1547.4 479.8" stroke="#6e6e6e" stroke-width="1.2"/></svg>
<div style="left:83px;top:532.3px;width:704.5px;height:1px;background:#e2e2e2;"></div>
<div style="left:83px;top:560px;width:704.5px;height:1px;background:#e2e2e2;"></div>
<div style="left:83px;top:587.6px;width:704.5px;height:1px;background:#e2e2e2;"></div>
<div style="left:83px;top:615.3px;width:704.5px;height:1px;background:#e2e2e2;"></div>
<div style="left:1592px;top:114px;width:3px;height:733px;background:linear-gradient(90deg,#e2e2e2,#eeeeee);"></div>
<svg style="left:1145px;top:812px" width="20" height="26" viewBox="1145 812 20 26"><path d="M1152.9 819.4V833.3L1156.1 830.4L1158.3 835.2L1160.1 834.4L1158.1 829.6L1162.4 829.4Z" fill="#fff" stroke="#555" stroke-width="0.9" stroke-linejoin="round"/></svg>
<span class="t" style="left:65.20px;top:23.27px;font-size:22.6px;color:#e4edf2;font-weight:400;transform:scaleX(0.9733);">AimBetter</span>
<span class="t" style="left:546.56px;top:22.48px;font-size:14.5px;color:#cadce6;font-weight:400;transform:scaleX(0.9358);">Home</span>
<span class="t" style="left:609.07px;top:22.48px;font-size:14.5px;color:#cadce6;font-weight:400;transform:scaleX(0.9336);">Performance</span>
<span class="t" style="left:709.00px;top:22.48px;font-size:14.5px;color:#cadce6;font-weight:400;transform:scaleX(0.8907);">Queries</span>
<span class="t" style="left:788.80px;top:22.48px;font-size:14.5px;color:#f7c600;font-weight:400;transform:scaleX(0.8813);">Observer</span>
<span class="t" style="left:885.60px;top:22.48px;font-size:14.5px;color:#a3b6c2;font-weight:400;transform:scaleX(0.8614);">Web</span>
<span class="t" style="left:944.80px;top:22.48px;font-size:14.5px;color:#cadce6;font-weight:400;transform:scaleX(0.9172);">Connections</span>
<span class="t" style="left:1471.00px;top:15.17px;font-size:9.6px;color:#a8c3d3;font-weight:400;transform:scaleX(0.9500);">Welcome back,</span>
<span class="t" style="left:1471.30px;top:26.88px;font-size:10.3px;color:#ffffff;font-weight:400;transform:scaleX(0.9323);text-shadow:0.35px 0 0 #fff;">Hi myuser@aimbetter....</span>
<span class="t" style="left:1471.00px;top:40.18px;font-size:9px;color:#a8c3d3;font-weight:400;transform:scaleX(0.9010);">(GMT +02:00)</span>
<span class="t" style="left:82.00px;top:83.81px;font-size:10.5px;color:#444;font-weight:400;transform:scaleX(0.9055);">Overview</span>
<span class="t" style="left:140.00px;top:83.81px;font-size:10.5px;color:#ffffff;font-weight:400;transform:scaleX(0.9168);">Event Log</span>
<span class="t" style="left:201.20px;top:83.81px;font-size:10.5px;color:#444;font-weight:400;transform:scaleX(0.8892);">DB BackUp</span>
<span class="t" style="left:267.60px;top:83.81px;font-size:10.5px;color:#444;font-weight:400;transform:scaleX(0.9202);">DeadLock</span>
<span class="t" style="left:329.70px;top:83.81px;font-size:10.5px;color:#444;font-weight:400;transform:scaleX(0.9294);">Change Tracking</span>
<span class="t" style="left:1431.50px;top:87.78px;font-size:9px;color:#5b4b00;font-weight:400;transform:scaleX(0.9050);">Last 1 day ending</span>
<span class="t" style="left:1501.50px;top:87.78px;font-size:9px;color:#5b4b00;font-weight:400;transform:scaleX(0.9092);">19-05-2024 09:16</span>
<span class="t" style="left:146.90px;top:126.03px;font-size:10.6px;color:#a0a0a0;font-weight:400;transform:scaleX(0.9078);">Filter</span>
<span class="t" style="left:1538.00px;top:126.87px;font-size:9.6px;color:#666;font-weight:400;transform:scaleX(0.9166);">13 Rows</span>
<span class="t" style="left:85.96px;top:157.59px;font-size:11px;color:#333;font-weight:400;transform:scaleX(0.9366);">Instance</span>
<span class="t" style="left:211.90px;top:157.59px;font-size:11px;color:#333;font-weight:400;transform:scaleX(0.8663);">Category</span>
<span class="t" style="left:312.00px;top:157.59px;font-size:11px;color:#333;font-weight:400;transform:scaleX(0.8838);">Total Events</span>
<span class="t" style="left:437.00px;top:157.59px;font-size:11px;color:#333;font-weight:400;transform:scaleX(0.8607);">Ratio</span>
<span class="t" style="left:495.80px;top:157.59px;font-size:11px;color:#333;font-weight:400;transform:scaleX(0.8204);">Events</span>
<span class="t" style="left:86.20px;top:202.93px;font-size:14.5px;color:#333;font-weight:400;transform:scaleX(0.8357);">WMS-SRV.CO.IL</span>
<span class="t" style="left:86.20px;top:216.73px;font-size:14.5px;color:#333;font-weight:400;transform:scaleX(0.8767);">(WMSDB )</span>
<span class="t" style="left:211.20px;top:212.10px;font-size:11.7px;color:#555;font-weight:400;transform:scaleX(0.8695);">ORA-00320</span>
<span class="t" style="left:380.90px;top:212.59px;font-size:11px;color:#555;font-weight:400;transform:scaleX(0.8401);">53 / 253</span>
<span class="t" style="left:446.00px;top:210.90px;font-size:13px;color:#555;font-weight:400;transform:scaleX(0.7937);">20%</span>
<span class="t" style="left:505.00px;top:182.95px;font-size:7.5px;color:#555;font-weight:400;">3</span>
<span class="t" style="left:499.00px;top:202.55px;font-size:7.5px;color:#555;font-weight:400;transform:scaleX(0.9751);">1.5</span>
<span class="t" style="left:505.00px;top:221.95px;font-size:7.5px;color:#555;font-weight:400;">0</span>
<span class="t" style="left:528.77px;top:234.13px;font-size:8px;color:#222;font-weight:400;transform:scaleX(0.9237);">09:00</span>
<span class="t" style="left:532.02px;top:242.83px;font-size:8px;color:#222;font-weight:400;transform:scaleX(0.9777);">Sat</span>
<span class="t" style="left:570.72px;top:234.13px;font-size:8px;color:#222;font-weight:400;transform:scaleX(0.9237);">10:00</span>
<span class="t" style="left:573.97px;top:242.83px;font-size:8px;color:#222;font-weight:400;transform:scaleX(0.9777);">Sat</span>
<span class="t" style="left:612.67px;top:234.13px;font-size:8px;color:#222;font-weight:400;transform:scaleX(0.9511);">11:00</span>
<span class="t" style="left:615.92px;top:242.83px;font-size:8px;color:#222;font-weight:400;transform:scaleX(0.9777);">Sat</span>
<span class="t" style="left:654.62px;top:234.13px;font-size:8px;color:#222;font-weight:400;transform:scaleX(0.9237);">12:00</span>
<span class="t" style="left:657.88px;top:242.83px;font-size:8px;color:#222;font-weight:400;transform:scaleX(0.9777);">Sat</span>
<span class="t" style="left:696.57px;top:234.13px;font-size:8px;color:#222;font-weight:400;transform:scaleX(0.9237);">13:00</span>
<span class="t" style="left:699.82px;top:242.83px;font-size:8px;color:#222;font-weight:400;transform:scaleX(0.9777);">Sat</span>
<span class="t" style="left:738.52px;top:234.13px;font-size:8px;color:#222;font-weight:400;transform:scaleX(0.9237);">14:00</span>
<span class="t" style="left:741.77px;top:242.83px;font-size:8px;color:#222;font-weight:400;transform:scaleX(0.9777);">Sat</span>
<span class="t" style="left:780.47px;top:234.13px;font-size:8px;color:#222;font-weight:400;transform:scaleX(0.9237);">15:00</span>
<span class="t" style="left:783.72px;top:242.83px;font-size:8px;color:#222;font-weight:400;transform:scaleX(0.9777);">Sat</span>
<span class="t" style="left:822.42px;top:234.13px;font-size:8px;color:#222;font-weight:400;transform:scaleX(0.9237);">16:00</span>
<span class="t" style="left:825.67px;top:242.83px;font-size:8px;color:#222;font-weight:400;transform:scaleX(0.9777);">Sat</span>
<span class="t" style="left:864.38px;top:234.13px;font-size:8px;color:#222;font-weight:400;transform:scaleX(0.9237);">17:00</span>
<span class="t" style="left:867.62px;top:242.83px;font-size:8px;color:#222;font-weight:400;transform:scaleX(0.9777);">Sat</span>
<span class="t" style="left:906.33px;top:234.13px;font-size:8px;color:#222;font-weight:400;transform:scaleX(0.9237);">18:00</span>
<span class="t" style="left:909.58px;top:242.83px;font-size:8px;color:#222;font-weight:400;transform:scaleX(0.9777);">Sat</span>
<span class="t" style="left:948.27px;top:234.13px;font-size:8px;color:#222;font-weight:400;transform:scaleX(0.9237);">19:00</span>
<span class="t" style="left:951.52px;top:242.83px;font-size:8px;color:#222;font-weight:400;transform:scaleX(0.9777);">Sat</span>
<span class="t" style="left:990.22px;top:234.13px;font-size:8px;color:#222;font-weight:400;transform:scaleX(0.9237);">20:00</span>
<span class="t" style="left:993.47px;top:242.83px;font-size:8px;color:#222;font-weight:400;transform:scaleX(0.9777);">Sat</span>
<span class="t" style="left:1032.17px;top:234.13px;font-size:8px;color:#222;font-weight:400;transform:scaleX(0.9237);">21:00</span>
<span class="t" style="left:1035.42px;top:242.83px;font-size:8px;color:#222;font-weight:400;transform:scaleX(0.9777);">Sat</span>
<span class="t" style="left:1074.12px;top:234.13px;font-size:8px;color:#222;font-weight:400;transform:scaleX(0.9237);">22:00</span>
<span class="t" style="left:1077.38px;top:242.83px;font-size:8px;color:#222;font-weight:400;transform:scaleX(0.9777);">Sat</span>
<span class="t" style="left:1116.08px;top:234.13px;font-size:8px;color:#222;font-weight:400;transform:scaleX(0.9237);">23:00</span>
<span class="t" style="left:1119.33px;top:242.83px;font-size:8px;color:#222;font-weight:400;transform:scaleX(0.9777);">Sat</span>
<span class="t" style="left:1158.03px;top:234.13px;font-size:8px;color:#222;font-weight:400;transform:scaleX(0.9237);">00:00</span>
<span class="t" style="left:1160.78px;top:242.83px;font-size:8px;color:#222;font-weight:400;transform:scaleX(0.9793);">Sun</span>
<span class="t" style="left:1199.97px;top:234.13px;font-size:8px;color:#222;font-weight:400;transform:scaleX(0.9237);">01:00</span>
<span class="t" style="left:1202.72px;top:242.83px;font-size:8px;color:#222;font-weight:400;transform:scaleX(0.9793);">Sun</span>
<span class="t" style="left:1241.92px;top:234.13px;font-size:8px;color:#222;font-weight:400;transform:scaleX(0.9237);">02:00</span>
<span class="t" style="left:1244.67px;top:242.83px;font-size:8px;color:#222;font-weight:400;transform:scaleX(0.9793);">Sun</span>
<span class="t" style="left:1283.88px;top:234.13px;font-size:8px;color:#222;font-weight:400;transform:scaleX(0.9237);">03:00</span>
<span class="t" style="left:1286.62px;top:242.83px;font-size:8px;color:#222;font-weight:400;transform:scaleX(0.9793);">Sun</span>
<span class="t" style="left:1325.83px;top:234.13px;font-size:8px;color:#222;font-weight:400;transform:scaleX(0.9237);">04:00</span>
<span class="t" style="left:1328.58px;top:242.83px;font-size:8px;color:#222;font-weight:400;transform:scaleX(0.9793);">Sun</span>
<span class="t" style="left:1367.78px;top:234.13px;font-size:8px;color:#222;font-weight:400;transform:scaleX(0.9237);">05:00</span>
<span class="t" style="left:1370.53px;top:242.83px;font-size:8px;color:#222;font-weight:400;transform:scaleX(0.9793);">Sun</span>
<span class="t" style="left:1409.72px;top:234.13px;font-size:8px;color:#222;font-weight:400;transform:scaleX(0.9237);">06:00</span>
<span class="t" style="left:1412.47px;top:242.83px;font-size:8px;color:#222;font-weight:400;transform:scaleX(0.9793);">Sun</span>
<span class="t" style="left:1451.68px;top:234.13px;font-size:8px;color:#222;font-weight:400;transform:scaleX(0.9237);">07:00</span>
<span class="t" style="left:1454.43px;top:242.83px;font-size:8px;color:#222;font-weight:400;transform:scaleX(0.9793);">Sun</span>
<span class="t" style="left:1493.62px;top:234.13px;font-size:8px;color:#222;font-weight:400;transform:scaleX(0.9237);">08:00</span>
<span class="t" style="left:1496.38px;top:242.83px;font-size:8px;color:#222;font-weight:400;transform:scaleX(0.9793);">Sun</span>
<span class="t" style="left:1535.58px;top:234.13px;font-size:8px;color:#222;font-weight:400;transform:scaleX(0.9237);">09:00</span>
<span class="t" style="left:1538.33px;top:242.83px;font-size:8px;color:#222;font-weight:400;transform:scaleX(0.9793);">Sun</span>
<span class="t" style="left:86.60px;top:291.69px;font-size:11px;color:#333;font-weight:400;transform:scaleX(0.9098);">DateTime</span>
<span class="t" style="left:220.00px;top:291.69px;font-size:11px;color:#333;font-weight:400;transform:scaleX(0.8809);">Source</span>
<span class="t" style="left:328.70px;top:291.69px;font-size:11px;color:#333;font-weight:400;transform:scaleX(0.8906);">Event</span>
<span class="t" style="left:1536.00px;top:291.69px;font-size:11px;color:#333;font-weight:400;transform:scaleX(0.8753);">Repeat</span>
<span class="t" style="left:86.60px;top:327.67px;font-size:11.5px;color:#555;font-weight:400;transform:scaleX(0.9192);">19-05-2024 08:33</span>
<span class="t" style="left:219.60px;top:327.67px;font-size:11.5px;color:#555;font-weight:400;transform:scaleX(0.8492);">WMS-SRV</span>
<span class="t" style="left:328.00px;top:327.67px;font-size:11.5px;color:#555;font-weight:400;transform:scaleX(0.9574);">Errors in file D:\ORACLE\diag\rdbms\wmsdb\wmsdb\trace\wmsdb_lgwr_8784.trc:</span>
<span class="t" style="left:726.30px;top:327.67px;font-size:11.5px;color:#555;font-weight:400;transform:scaleX(0.9300);">ORA-00320: cannot read file header from log 5 of thread 1</span>
<span class="t" style="left:1005.60px;top:327.67px;font-size:11.5px;color:#555;font-weight:400;transform:scaleX(0.9229);">ORA-00312: online log 5 thread 1:</span>
<span class="t" style="left:1169.70px;top:327.67px;font-size:11.5px;color:#555;font-weight:400;transform:scaleX(1.0120);">'\\192.********</span>
<span class="t" style="left:1238.10px;top:327.67px;font-size:11.5px;color:#555;font-weight:400;transform:scaleX(0.8683);">\BACKUPS\WMS_REDOLOGS\REDOO2_MF_5_HBTRPH...</span>
<span class="t" style="left:1536.50px;top:327.67px;font-size:11.5px;color:#555;font-weight:400;">1</span>
<span class="t" style="left:86.60px;top:377.27px;font-size:11.5px;color:#555;font-weight:400;transform:scaleX(0.9192);">19-05-2024 08:08</span>
<span class="t" style="left:219.60px;top:377.27px;font-size:11.5px;color:#555;font-weight:400;transform:scaleX(0.8492);">WMS-SRV</span>
<span class="t" style="left:328.00px;top:377.27px;font-size:11.5px;color:#555;font-weight:400;transform:scaleX(0.9574);">Errors in file D:\ORACLE\diag\rdbms\wmsdb\wmsdb\trace\wmsdb_lgwr_8784.trc:</span>
<span class="t" style="left:726.30px;top:377.27px;font-size:11.5px;color:#555;font-weight:400;transform:scaleX(0.9300);">ORA-00320: cannot read file header from log 5 of thread 1</span>
<span class="t" style="left:1005.60px;top:377.27px;font-size:11.5px;color:#555;font-weight:400;transform:scaleX(0.9229);">ORA-00312: online log 5 thread 1:</span>
<span class="t" style="left:1169.70px;top:377.27px;font-size:11.5px;color:#555;font-weight:400;transform:scaleX(1.0120);">'\\192.********</span>
<span class="t" style="left:1238.10px;top:377.27px;font-size:11.5px;color:#555;font-weight:400;transform:scaleX(0.8683);">\BACKUPS\WMS_REDOLOGS\REDOO2_MF_5_HBTRPH...</span>
<span class="t" style="left:1536.50px;top:377.27px;font-size:11.5px;color:#555;font-weight:400;">1</span>
<span class="t" style="left:86.60px;top:426.67px;font-size:11.5px;color:#555;font-weight:400;transform:scaleX(0.9192);">19-05-2024 07:43</span>
<span class="t" style="left:219.60px;top:426.67px;font-size:11.5px;color:#555;font-weight:400;transform:scaleX(0.8492);">WMS-SRV</span>
<span class="t" style="left:328.00px;top:426.67px;font-size:11.5px;color:#555;font-weight:400;transform:scaleX(0.9574);">Errors in file D:\ORACLE\diag\rdbms\wmsdb\wmsdb\trace\wmsdb_lgwr_8784.trc:</span>
<span class="t" style="left:726.30px;top:426.67px;font-size:11.5px;color:#555;font-weight:400;transform:scaleX(0.9300);">ORA-00320: cannot read file header from log 5 of thread 1</span>
<span class="t" style="left:1005.60px;top:426.67px;font-size:11.5px;color:#555;font-weight:400;transform:scaleX(0.9229);">ORA-00312: online log 5 thread 1:</span>
<span class="t" style="left:1169.70px;top:426.67px;font-size:11.5px;color:#555;font-weight:400;transform:scaleX(1.0120);">'\\192.********</span>
<span class="t" style="left:1238.10px;top:426.67px;font-size:11.5px;color:#555;font-weight:400;transform:scaleX(0.8683);">\BACKUPS\WMS_REDOLOGS\REDOO2_MF_5_HBTRPH...</span>
<span class="t" style="left:1536.50px;top:426.67px;font-size:11.5px;color:#555;font-weight:400;">1</span>
<span class="t" style="left:82.60px;top:466.44px;font-size:12px;color:#f0282d;font-weight:400;transform:scaleX(0.9519);">Event Log</span>
<span class="t" style="left:83.70px;top:511.84px;font-size:12px;color:#222;font-weight:400;transform:scaleX(0.9245);">Errors</span>
<span class="t" style="left:780.30px;top:511.84px;font-size:12px;color:#555;font-weight:400;">1</span>
<span class="t" style="left:83.70px;top:539.54px;font-size:12px;color:#222;font-weight:400;transform:scaleX(0.9398);">Runtime</span>
<span class="t" style="left:697.70px;top:539.54px;font-size:12px;color:#555;font-weight:400;transform:scaleX(0.9424);">19-05-2024 08:33</span>
<span class="t" style="left:83.70px;top:567.24px;font-size:12px;color:#222;font-weight:400;transform:scaleX(0.9447);">Category</span>
<span class="t" style="left:729.30px;top:567.24px;font-size:12px;color:#555;font-weight:400;transform:scaleX(0.9106);">ORA-00320</span>
<span class="t" style="left:83.70px;top:595.04px;font-size:12px;color:#222;font-weight:400;transform:scaleX(0.9231);">Source</span>
<span class="t" style="left:736.10px;top:595.04px;font-size:12px;color:#555;font-weight:400;transform:scaleX(0.8862);">WMS-SRV</span>
<span class="t" style="left:878.00px;top:510.24px;font-size:12px;color:#222;font-weight:400;transform:scaleX(0.9466);">Message</span>
<span class="t" style="left:878.00px;top:537.84px;font-size:12px;color:#555;font-weight:400;transform:scaleX(0.9747);">Errors in file D:\ORACLE\diag\rdbms\wmsdb\wmsdb\trace\wmsdb_lgwr_8784.trc: ORA-00320: cannot read file header from log 5 of</span>
<span class="t" style="left:878.00px;top:555.44px;font-size:12px;color:#555;font-weight:400;transform:scaleX(0.9336);">thread 1 ORA-00312: online log 5 thread 1: '\\192.********\BACKUPS\WMS_REDOLOGS\REDOO2_MF_5_HBTRPHVV_.LOG' ORA-27070:</span>
<span class="t" style="left:878.00px;top:572.94px;font-size:12px;color:#555;font-weight:400;transform:scaleX(0.9574);">async read/write failed OSD-04006: ReadFile() failure, unable to read from file O/S-Error: (OS 59) An unexpected network error occurred.</span>
</body></html>
